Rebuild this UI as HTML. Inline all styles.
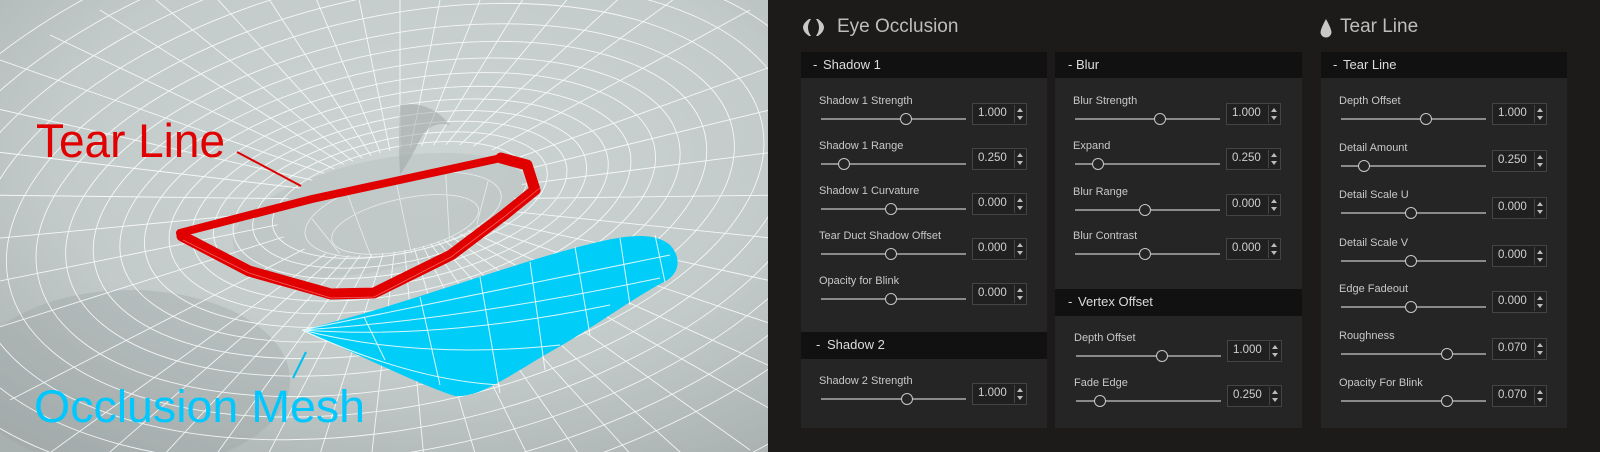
<!DOCTYPE html>
<html><head><meta charset="utf-8"><style>
*{margin:0;padding:0;box-sizing:border-box}
html,body{width:1600px;height:452px;overflow:hidden}
body{background:#1c1b1a;position:relative;font-family:"Liberation Sans",sans-serif}
.abs{position:absolute}
.panel{position:absolute;background:#252525}
.hdr{position:absolute;background:#111;color:#dcdcdc;font-size:13px;line-height:26px;height:26px}
.hdr span{position:absolute}
.row{position:absolute;width:240px;height:36px}
.row .l{position:absolute;left:2px;top:0;font-size:11px;color:#c8c8c8;line-height:16px;white-space:nowrap}
.row .s{position:absolute;left:4px;top:25px;width:145px;height:2px;background:#8a8a8a}
.row .k{position:absolute;top:20px;width:12px;height:12px;border-radius:50%;border:1.5px solid #c8c8c8;background:#252525}
.row .in{position:absolute;left:155px;top:10px;width:55px;height:22px;border:1px solid #444;background:#202020}
.row .in b{position:absolute;left:5px;top:3px;font-weight:normal;font-size:11.5px;color:#d0d0d0}
.row .in i{position:absolute;left:41px;top:1px;width:11px;height:18px;border-left:1px solid #444}
.row .in i:before{content:"";position:absolute;left:2px;top:3px;border:3.5px solid transparent;border-bottom:4px solid #bbb;border-top:0}
.row .in i:after{content:"";position:absolute;left:2px;top:11px;border:3.5px solid transparent;border-top:4px solid #bbb;border-bottom:0}
.title{position:absolute;top:16px;font-size:19px;color:#bdbdbd;line-height:22px}
</style></head><body>
<svg class="abs" style="left:0;top:0" width="768" height="452" viewBox="0 0 768 452">
<defs>
<radialGradient id="bg" cx="0.55" cy="0.35" r="0.8"><stop offset="0" stop-color="#cdd4d4"/><stop offset="0.6" stop-color="#c2caca"/><stop offset="1" stop-color="#a8b0b0"/></radialGradient>
<mask id="m"><rect x="-100" y="-100" width="1000" height="700" fill="#fff"/><ellipse cx="400" cy="200" rx="125" ry="50" fill="#000" transform="rotate(-12 400 200)"/></mask>
</defs>
<rect width="768" height="452" fill="url(#bg)"/>
<ellipse cx="130" cy="380" rx="160" ry="90" fill="#9aa3a3" opacity="0.35"/>
<ellipse cx="380" cy="215" rx="150" ry="55" fill="#b7bfbf" opacity="0.5" transform="rotate(-12 380 215)"/>
<g fill="none" stroke="#fff" stroke-width="0.9" opacity="0.85">
<g transform="rotate(-12 400 200)">
<ellipse cx="400" cy="200" rx="130" ry="53"/>
<ellipse cx="400" cy="200" rx="150" ry="62"/>
<ellipse cx="400" cy="200" rx="170" ry="72"/>
<ellipse cx="400" cy="200" rx="190" ry="82"/>
<ellipse cx="400" cy="200" rx="212" ry="93"/>
<ellipse cx="400" cy="200" rx="235" ry="105"/>
<ellipse cx="400" cy="200" rx="260" ry="118"/>
<ellipse cx="400" cy="200" rx="285" ry="132"/>
<ellipse cx="400" cy="200" rx="312" ry="148"/>
<ellipse cx="400" cy="200" rx="340" ry="165"/>
<ellipse cx="400" cy="200" rx="370" ry="185"/>
<ellipse cx="400" cy="200" rx="400" ry="205"/>
<ellipse cx="400" cy="200" rx="435" ry="227"/>
<ellipse cx="400" cy="200" rx="470" ry="250"/>
<ellipse cx="400" cy="200" rx="510" ry="275"/>
<ellipse cx="400" cy="200" rx="550" ry="300"/>
<ellipse cx="400" cy="200" rx="640" ry="360"/>
</g>
<path mask="url(#m)" d="M400 200L400 -50M400 200L350 -45M400 200L300 -40M400 200L250 -30M400 200L200 -20M400 200L150 -5M400 200L100 10M400 200L50 35M400 200L0 60M400 200L-20 105M400 200L-20 150M400 200L-20 195M400 200L-20 240M400 200L-20 285M400 200L-10 330M400 200L10 400M400 200L40 460M400 200L95 465M400 200L150 470M400 200L205 470M400 200L260 470M400 200L315 470M400 200L370 470M400 200L425 470M400 200L480 470M400 200L535 470M400 200L590 470M400 200L645 470M400 200L700 470M400 200L750 450M400 200L790 420M400 200L790 375M400 200L790 330M400 200L790 285M400 200L790 240M400 200L790 195M400 200L790 150M400 200L790 105M400 200L790 60M400 200L750 10M400 200L700 -20M400 200L650 -30M400 200L600 -40M400 200L550 -45M400 200L500 -50M400 200L450 -50"/>
<g transform="rotate(-12 400 200)" opacity="0.7">
<ellipse cx="400" cy="215" rx="100" ry="38"/>
<ellipse cx="400" cy="225" rx="75" ry="26"/>
<path d="M310 200L330 240M350 185L360 250M400 180L400 255M450 185L440 250M490 200L470 240"/>
</g>
</g>
<path d="M400 105Q430 100 450 125Q430 120 420 140Q410 160 400 175Q398 140 400 105Z" fill="#9aa2a2" opacity="0.5"/>
<g fill="none" stroke="#e00000" stroke-linejoin="round" stroke-linecap="round">
<path d="M180 233L312 199L501 158" stroke-width="8"/>
<path d="M182 236L249 271L331 294L374 293L451 255L504 215L535 190L527 165L501 158" stroke-width="11"/>
</g>
<path d="M183 240L249 273L331 298L374 297L451 257L504 217L540 188" fill="none" stroke="#ff8080" stroke-width="0.8" opacity="0.7"/>
<path d="M302 330C380 312 480 275 560 252C610 238 650 228 670 245C682 258 680 275 662 283C630 300 590 330 550 352C510 375 480 398 455 396C420 385 360 355 302 330Z" fill="#00cdf8"/>
<g fill="none" stroke="#fff" stroke-width="1" opacity="0.85">
<path d="M302 330Q450 300 670 255M302 330Q460 320 660 278M302 330Q440 340 610 305M302 330Q420 360 560 345M302 330Q410 380 500 385"/>
<path d="M364 317L385 360M420 297L440 385M480 277L500 393M530 262L545 370M575 247L590 335M620 238L630 305M655 235L665 282"/>
</g>
<line x1="237" y1="152" x2="301" y2="186" stroke="#d00" stroke-width="2"/>
<line x1="306" y1="352" x2="293" y2="378" stroke="#00c0ee" stroke-width="2"/>
<text x="36" y="157" font-family="Liberation Sans, sans-serif" font-size="47" fill="#e00000" textLength="189" lengthAdjust="spacingAndGlyphs">Tear Line</text>
<text x="34" y="422" font-family="Liberation Sans, sans-serif" font-size="45" fill="#00c8ff" textLength="331" lengthAdjust="spacingAndGlyphs">Occlusion Mesh</text>
</svg>

<svg class="abs" style="left:795px;top:15px" width="40" height="26" viewBox="795 15 40 26">
<path d="M811 19L809 19Q797 27.5 809 36L811 36Q805 27.5 811 19Z" fill="#c8c8c8"/>
<path d="M816 19L818 19Q830 27.5 818 36L816 36Q822 27.5 816 19Z" fill="#c8c8c8"/>
</svg>
<div class="title" style="left:837px">Eye Occlusion</div>
<svg class="abs" style="left:1318px;top:17px" width="16" height="24" viewBox="0 0 16 24">
<path d="M8 2Q3 11 2.5 15A5.5 5.5 0 0 0 13.5 15Q13 11 8 2Z" fill="#c8c8c8"/>
</svg>
<div class="title" style="left:1340px">Tear Line</div>

<div class="panel" style="left:801px;top:52px;width:246px;height:280px"></div>
<div class="hdr" style="left:801px;top:52px;width:246px"><span style="left:12px">-</span><span style="left:22px">Shadow 1</span></div>
<div class="panel" style="left:801px;top:332px;width:246px;height:96px"></div>
<div class="hdr" style="left:801px;top:332px;width:246px;height:27px"><span style="left:15px">-</span><span style="left:26px">Shadow 2</span></div>

<div class="row" style="left:817px;top:93px"><div class="l">Shadow 1 Strength</div><div class="s"></div><div class="k" style="left:83px"></div><div class="in"><b>1.000</b><i></i></div></div>
<div class="row" style="left:817px;top:138px"><div class="l">Shadow 1 Range</div><div class="s"></div><div class="k" style="left:21px"></div><div class="in"><b>0.250</b><i></i></div></div>
<div class="row" style="left:817px;top:183px"><div class="l">Shadow 1 Curvature</div><div class="s"></div><div class="k" style="left:68px"></div><div class="in"><b>0.000</b><i></i></div></div>
<div class="row" style="left:817px;top:228px"><div class="l">Tear Duct Shadow Offset</div><div class="s"></div><div class="k" style="left:68px"></div><div class="in"><b>0.000</b><i></i></div></div>
<div class="row" style="left:817px;top:273px"><div class="l">Opacity for Blink</div><div class="s"></div><div class="k" style="left:68px"></div><div class="in"><b>0.000</b><i></i></div></div>
<div class="row" style="left:817px;top:373px"><div class="l">Shadow 2 Strength</div><div class="s"></div><div class="k" style="left:84px"></div><div class="in"><b>1.000</b><i></i></div></div>

<div class="panel" style="left:1055px;top:52px;width:247px;height:237px"></div>
<div class="hdr" style="left:1055px;top:52px;width:247px"><span style="left:13px">-</span><span style="left:21px">Blur</span></div>
<div class="panel" style="left:1055px;top:289px;width:247px;height:139px"></div>
<div class="hdr" style="left:1055px;top:289px;width:247px;height:27px"><span style="left:13px">-</span><span style="left:23px">Vertex Offset</span></div>

<div class="row" style="left:1071px;top:93px"><div class="l">Blur Strength</div><div class="s"></div><div class="k" style="left:83px"></div><div class="in"><b>1.000</b><i></i></div></div>
<div class="row" style="left:1071px;top:138px"><div class="l">Expand</div><div class="s"></div><div class="k" style="left:21px"></div><div class="in"><b>0.250</b><i></i></div></div>
<div class="row" style="left:1071px;top:184px"><div class="l">Blur Range</div><div class="s"></div><div class="k" style="left:68px"></div><div class="in"><b>0.000</b><i></i></div></div>
<div class="row" style="left:1071px;top:228px"><div class="l">Blur Contrast</div><div class="s"></div><div class="k" style="left:68px"></div><div class="in"><b>0.000</b><i></i></div></div>
<div class="row" style="left:1072px;top:330px"><div class="l">Depth Offset</div><div class="s"></div><div class="k" style="left:84px"></div><div class="in"><b>1.000</b><i></i></div></div>
<div class="row" style="left:1072px;top:375px"><div class="l">Fade Edge</div><div class="s"></div><div class="k" style="left:22px"></div><div class="in"><b>0.250</b><i></i></div></div>

<div class="panel" style="left:1321px;top:52px;width:246px;height:376px"></div>
<div class="hdr" style="left:1321px;top:52px;width:246px"><span style="left:12px">-</span><span style="left:22px">Tear Line</span></div>

<div class="row" style="left:1337px;top:93px"><div class="l">Depth Offset</div><div class="s"></div><div class="k" style="left:83px"></div><div class="in"><b>1.000</b><i></i></div></div>
<div class="row" style="left:1337px;top:140px"><div class="l">Detail Amount</div><div class="s"></div><div class="k" style="left:21px"></div><div class="in"><b>0.250</b><i></i></div></div>
<div class="row" style="left:1337px;top:187px"><div class="l">Detail Scale U</div><div class="s"></div><div class="k" style="left:68px"></div><div class="in"><b>0.000</b><i></i></div></div>
<div class="row" style="left:1337px;top:235px"><div class="l">Detail Scale V</div><div class="s"></div><div class="k" style="left:68px"></div><div class="in"><b>0.000</b><i></i></div></div>
<div class="row" style="left:1337px;top:281px"><div class="l">Edge Fadeout</div><div class="s"></div><div class="k" style="left:68px"></div><div class="in"><b>0.000</b><i></i></div></div>
<div class="row" style="left:1337px;top:328px"><div class="l">Roughness</div><div class="s"></div><div class="k" style="left:104px"></div><div class="in"><b>0.070</b><i></i></div></div>
<div class="row" style="left:1337px;top:375px"><div class="l">Opacity For Blink</div><div class="s"></div><div class="k" style="left:104px"></div><div class="in"><b>0.070</b><i></i></div></div>
</body></html>
